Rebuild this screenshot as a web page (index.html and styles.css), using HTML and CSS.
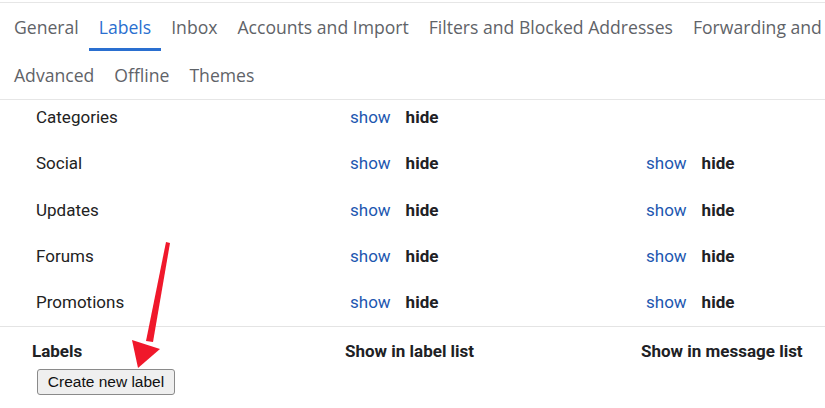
FILE: index.html
```html
<!DOCTYPE html>
<html>
<head>
<meta charset="utf-8">
<link rel="stylesheet" href="styles.css">
</head>
<body>
<div class="page">
  <div class="topline"></div>
  <nav class="tabs">
    <div class="tabrow">
      <span class="tab">General</span>
      <span class="tab active">Labels</span>
      <span class="tab">Inbox</span>
      <span class="tab">Accounts and Import</span>
      <span class="tab">Filters and Blocked Addresses</span>
      <span class="tab">Forwarding and POP/IMAP</span>
    </div>
    <div class="tabrow">
      <span class="tab">Advanced</span>
      <span class="tab">Offline</span>
      <span class="tab">Themes</span>
    </div>
  </nav>
  <section class="rows">
    <div class="row"><span class="name">Categories</span><span class="opts"><a class="show">show</a><b class="hide">hide</b></span><span class="opts"></span></div>
    <div class="row"><span class="name">Social</span><span class="opts"><a class="show">show</a><b class="hide">hide</b></span><span class="opts"><a class="show">show</a><b class="hide">hide</b></span></div>
    <div class="row"><span class="name">Updates</span><span class="opts"><a class="show">show</a><b class="hide">hide</b></span><span class="opts"><a class="show">show</a><b class="hide">hide</b></span></div>
    <div class="row"><span class="name">Forums</span><span class="opts"><a class="show">show</a><b class="hide">hide</b></span><span class="opts"><a class="show">show</a><b class="hide">hide</b></span></div>
    <div class="row"><span class="name">Promotions</span><span class="opts"><a class="show">show</a><b class="hide">hide</b></span><span class="opts"><a class="show">show</a><b class="hide">hide</b></span></div>
  </section>
  <section class="labels">
    <div class="head"><span>Labels</span><span>Show in label list</span><span>Show in message list</span></div>
    <button class="create">Create new label</button>
  </section>
  <svg class="arrow" width="825" height="408" viewBox="0 0 825 408">
    <polygon points="166,242 170,243 153,342 146,341" fill="#f0182b"/>
    <polygon points="132,340 160,349 138,368" fill="#f0182b"/>
  </svg>
</div>
</body>
</html>
```
FILE: styles.css
```css
html, body {
  margin: 0;
  padding: 0;
  background: #fff;
  overflow: hidden;
}
.page {
  position: relative;
  width: 825px;
  height: 408px;
  overflow: hidden;
  font-family: Roboto, "Liberation Sans", sans-serif;
}
.topline {
  height: 2px;
  border-bottom: 1px solid #e6e6e6;
}
.tabs {
  padding-left: 4px;
  border-bottom: 1px solid #e6e6e6;
  font-family: "Open Sans", Roboto, sans-serif;
  font-size: 17.6px;
  color: #5f6368;
}
.tabrow {
  display: flex;
  white-space: nowrap;
  height: 48px;
}
.tab {
  padding: 0 10px;
  line-height: 48px;
  height: 48px;
  box-sizing: border-box;
}
.tab.active {
  color: #2a6fd0;
  border-bottom: 3px solid #2a6fd0;
}
.rows {
  padding: 6px 0 13px 14px;
  display: flex;
  flex-direction: column;
  gap: 24.3px;
  border-bottom: 1px solid #e4e4e4;
}
.row, .head {
  display: grid;
  grid-template-columns: 326px 296px 1fr;
  line-height: 22px;
  font-size: 17px;
  color: #222;
}
.row .name { padding-left: 22px; }
.opts { padding-left: 10px; }
.show { color: #1d57b0; margin-right: 15px; }
.hide { font-weight: 700; color: #202124; }
.labels {
  padding: 13px 0 0 14px;
}
.head span {
  font-weight: 700;
  color: #202124;
  padding-left: 5px;
}
.head span:first-child { padding-left: 18px; }
.create {
  margin: 7px 0 0 23px;
  width: 138px;
  height: 26px;
  padding: 0;
  font-family: "Liberation Sans", Arial, sans-serif;
  font-size: 15.5px;
  color: #111;
  background: #efefef;
  border: 1px solid #8a8a8a;
  border-radius: 3px;
}
.arrow {
  position: absolute;
  left: 0;
  top: 0;
  pointer-events: none;
}
```
